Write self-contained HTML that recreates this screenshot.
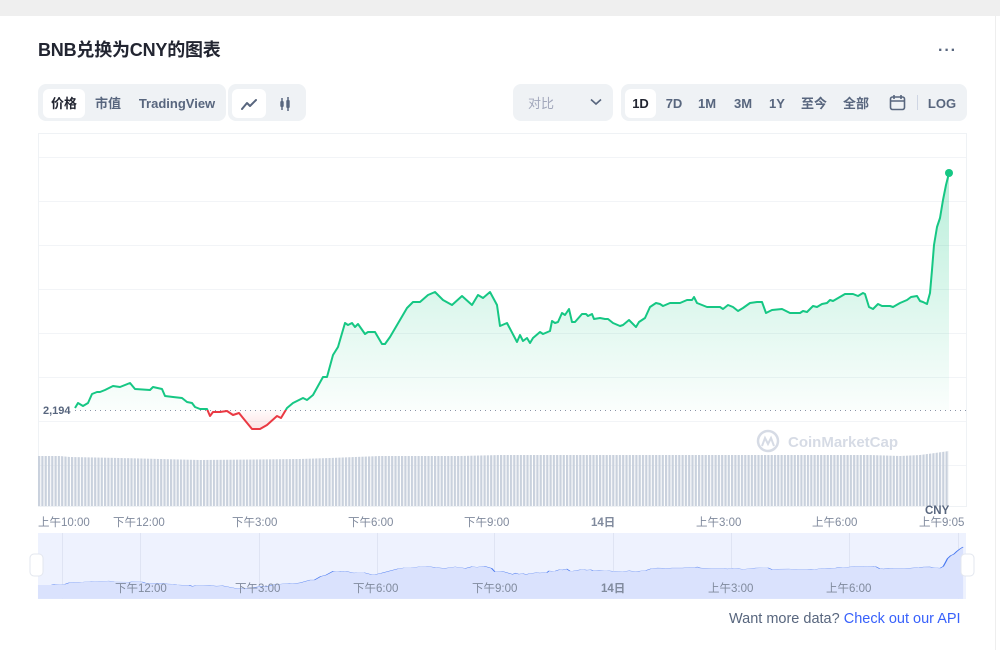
<!DOCTYPE html>
<html><head><meta charset="utf-8"><style>
*{margin:0;padding:0;box-sizing:border-box}
body{width:1000px;height:650px;background:#fff;font-family:"Liberation Sans","Noto Sans CJK SC",sans-serif;position:relative;overflow:hidden;color:#222531}
.top{position:absolute;left:0;top:0;width:1000px;height:16px;background:#efefef}
.rline{position:absolute;left:995px;top:16px;width:1px;height:634px;background:#eee}
h1{position:absolute;left:38px;top:36px;font-size:18px;font-weight:700;letter-spacing:-0.2px}
.dots{position:absolute;left:938px;top:42px;font-size:16px;color:#58667e;font-weight:700;letter-spacing:1px}
.grp{position:absolute;top:84px;height:37px;background:#eff2f5;border-radius:8px}
.btn{position:absolute;top:5px;height:29px;line-height:29px;font-size:13px;font-weight:700;color:#58667e;text-align:center;border-radius:6px}
.act{background:#fff;color:#222531}
.lbl{position:absolute;font-size:11.5px;color:#808a9d;white-space:nowrap}
</style></head><body>
<div class="top"></div><div class="rline"></div>
<h1>BNB兑换为CNY的图表</h1>
<div class="dots">···</div>

<div class="grp" style="left:38px;width:188px">
 <div class="btn act" style="left:5px;width:42px">价格</div>
 <div class="btn" style="left:50px;width:40px">市值</div>
 <div class="btn" style="left:96px;width:86px">TradingView</div>
</div>
<div class="grp" style="left:228px;width:78px">
 <div class="btn act" style="left:4px;width:34px"><svg width="18" height="14" viewBox="0 0 18 14" style="margin-top:8px"><path d="M2 12 L7 6 L10 9 L16 3" fill="none" stroke="#58667e" stroke-width="2" stroke-linecap="round" stroke-linejoin="round"/></svg></div>
 <div class="btn" style="left:40px;width:34px"><svg width="14" height="16" viewBox="0 0 14 16" style="margin-top:7px"><path d="M4 2v12M10 1v14" stroke="#58667e" stroke-width="1.5"/><rect x="2.3" y="5" width="3.4" height="6" rx="1" fill="#58667e"/><rect x="8.3" y="4" width="3.4" height="8" rx="1" fill="#58667e"/></svg></div>
</div>
<div class="grp" style="left:513px;width:100px;border-radius:8px">
 <div class="btn" style="left:14px;width:28px;color:#a1a7bb;font-weight:400">对比</div>
 <svg style="position:absolute;left:77px;top:14px" width="12" height="8" viewBox="0 0 12 8"><path d="M1 1.5 L6 6 L11 1.5" fill="none" stroke="#58667e" stroke-width="1.6"/></svg>
</div>
<div class="grp" style="left:621px;width:346px">
 <div class="btn act" style="left:4px;width:31px">1D</div>
 <div class="btn" style="left:38px;width:30px">7D</div>
 <div class="btn" style="left:71px;width:30px">1M</div>
 <div class="btn" style="left:106px;width:32px">3M</div>
 <div class="btn" style="left:142px;width:28px">1Y</div>
 <div class="btn" style="left:176px;width:34px">至今</div>
 <div class="btn" style="left:218px;width:34px">全部</div>
 <svg style="position:absolute;left:268px;top:10px" width="17" height="17" viewBox="0 0 17 17"><rect x="1.5" y="3" width="14" height="12.5" rx="2" fill="none" stroke="#58667e" stroke-width="1.6"/><path d="M1.5 7h14M5 1v4M12 1v4" stroke="#58667e" stroke-width="1.6"/></svg>
 <div style="position:absolute;left:296px;top:11px;width:1px;height:15px;background:#cfd6e4"></div>
 <div class="btn" style="left:303px;width:36px">LOG</div>
</div>

<svg style="position:absolute;left:0;top:0" width="1000" height="650">
<defs>
<linearGradient id="gg" x1="0" y1="173" x2="0" y2="410" gradientUnits="userSpaceOnUse"><stop offset="0" stop-color="#16c784" stop-opacity="0.3"/><stop offset="1" stop-color="#16c784" stop-opacity="0.02"/></linearGradient>
<linearGradient id="rg" x1="0" y1="410" x2="0" y2="430" gradientUnits="userSpaceOnUse"><stop offset="0" stop-color="#ea3943" stop-opacity="0.02"/><stop offset="1" stop-color="#ea3943" stop-opacity="0.15"/></linearGradient>
<clipPath id="up"><rect x="0" y="0" width="1000" height="410"/></clipPath>
<clipPath id="dn"><rect x="0" y="410" width="1000" height="100"/></clipPath>
<pattern id="bars" x="38" y="0" width="3.3" height="10" patternUnits="userSpaceOnUse"><rect x="0" y="0" width="2.2" height="10" fill="#c9d1dd"/></pattern>
<polyline id="pl" points="75,408 78,403 83,406 88,403 92,394 97,392 100,392 105,390 113,386 120,387 130,383 135,389 150,390 153,387 162,389 165,396 173,397 182,398 187,402 192,403 195,407 200,409 207,409 210,416 213,412 220,412 227,411 233,415 239,413 243,418 252,429 257,429 260,429 267,425 277,416 281,418 287,408 293,403 303,398 307,400 313,395 323,377 327,377 333,355 338,347 345,323 348,325 352,323 355,327 358,324 365,334 368,332 375,332 382,344 385,344 390,337 407,308 413,302 420,302 428,295 435,292 443,300 452,305 462,296 472,305 478,295 483,298 490,292 497,305 500,326 507,323 517,342 520,335 523,341 527,338 530,343 533,338 540,332 543,334 550,331 552,321 555,323 558,322 562,313 565,315 569,309 572,322 575,322 582,314 586,314 588,316 592,314 594,319 600,318 605,319 608,319 613,323 620,326 623,325 629,320 636,327 639,322 645,318 650,307 656,303 660,304 663,306 670,303 680,303 687,300 692,300 694,297 697,303 707,307 717,307 720,307 723,309 728,305 733,307 738,311 743,308 750,303 757,302 762,302 766,313 772,310 782,309 790,313 800,313 803,311 807,312 813,306 817,307 822,304 827,303 830,300 833,301 845,294 853,294 858,296 863,293 865,294 869,307 873,309 878,304 882,306 890,306 893,307 900,303 907,300 911,297 917,296 920,301 923,302 927,304 930,293 932,270 934,245 937,227 940,218 943,200 946,185 949,173" fill="none"/>
</defs>
<rect x="38.5" y="133.5" width="928" height="373" fill="none" stroke="#eff2f5"/>
<g stroke="#f2f4f7" stroke-width="1">
<line x1="39" y1="157.5" x2="966" y2="157.5"/><line x1="39" y1="201.5" x2="966" y2="201.5"/><line x1="39" y1="245.5" x2="966" y2="245.5"/><line x1="39" y1="289.5" x2="966" y2="289.5"/><line x1="39" y1="333.5" x2="966" y2="333.5"/><line x1="39" y1="377.5" x2="966" y2="377.5"/><line x1="39" y1="421.5" x2="966" y2="421.5"/><line x1="39" y1="465.5" x2="966" y2="465.5"/>
</g>
<polygon points="38,456 60,456 70,457 120,458 160,459 200,460 300,459 330,458 380,456 460,456 500,455 560,455 700,455 800,455 870,455 900,456 920,455 935,453 949,451 949,506 38,506" fill="url(#bars)"/>
<polygon clip-path="url(#up)" points="75,410 75,408 78,403 83,406 88,403 92,394 97,392 100,392 105,390 113,386 120,387 130,383 135,389 150,390 153,387 162,389 165,396 173,397 182,398 187,402 192,403 195,407 200,409 207,409 210,416 213,412 220,412 227,411 233,415 239,413 243,418 252,429 257,429 260,429 267,425 277,416 281,418 287,408 293,403 303,398 307,400 313,395 323,377 327,377 333,355 338,347 345,323 348,325 352,323 355,327 358,324 365,334 368,332 375,332 382,344 385,344 390,337 407,308 413,302 420,302 428,295 435,292 443,300 452,305 462,296 472,305 478,295 483,298 490,292 497,305 500,326 507,323 517,342 520,335 523,341 527,338 530,343 533,338 540,332 543,334 550,331 552,321 555,323 558,322 562,313 565,315 569,309 572,322 575,322 582,314 586,314 588,316 592,314 594,319 600,318 605,319 608,319 613,323 620,326 623,325 629,320 636,327 639,322 645,318 650,307 656,303 660,304 663,306 670,303 680,303 687,300 692,300 694,297 697,303 707,307 717,307 720,307 723,309 728,305 733,307 738,311 743,308 750,303 757,302 762,302 766,313 772,310 782,309 790,313 800,313 803,311 807,312 813,306 817,307 822,304 827,303 830,300 833,301 845,294 853,294 858,296 863,293 865,294 869,307 873,309 878,304 882,306 890,306 893,307 900,303 907,300 911,297 917,296 920,301 923,302 927,304 930,293 932,270 934,245 937,227 940,218 943,200 946,185 949,173 949,410" fill="url(#gg)"/>
<polygon clip-path="url(#dn)" points="200,410 207,409 210,416 213,412 220,412 227,411 233,415 239,413 243,418 252,429 257,429 260,429 267,425 277,416 281,418 287,408 287,410" fill="url(#rg)"/>
<line x1="75" y1="410.5" x2="966" y2="410.5" stroke="#8a93a6" stroke-width="1" stroke-dasharray="1,4"/>
<use href="#pl" clip-path="url(#up)" stroke="#16c784" stroke-width="2" stroke-linejoin="round"/>
<use href="#pl" clip-path="url(#dn)" stroke="#ea3943" stroke-width="2" stroke-linejoin="round"/>
<circle cx="949" cy="173" r="4" fill="#16c784"/>
<text x="43" y="414" font-family="Liberation Sans,sans-serif" font-size="11" font-weight="700" fill="#58667e">2,194</text>
<circle cx="768" cy="441" r="10" fill="none" stroke="#d6dbe5" stroke-width="2.5"/>
<path d="M762 446 L765 438 L768 444 L771 438 L774 446" fill="none" stroke="#d6dbe5" stroke-width="2"/>
<text x="788" y="447" font-family="Liberation Sans,sans-serif" font-size="15" font-weight="700" fill="#d6dbe5">CoinMarketCap</text>
<rect x="38" y="533" width="928" height="66" fill="#eef2fe"/>
<g stroke="#dfe4f3"><line x1="62.5" y1="533" x2="62.5" y2="599"/><line x1="140.5" y1="533" x2="140.5" y2="599"/><line x1="259.5" y1="533" x2="259.5" y2="599"/><line x1="377.5" y1="533" x2="377.5" y2="599"/><line x1="494.5" y1="533" x2="494.5" y2="599"/><line x1="613.5" y1="533" x2="613.5" y2="599"/><line x1="731.5" y1="533" x2="731.5" y2="599"/><line x1="849.5" y1="533" x2="849.5" y2="599"/><line x1="958.5" y1="533" x2="958.5" y2="599"/></g>
<g transform="translate(-26.7,518.9) scale(1.043,0.162)">
<polygon points="62,408 75,408 78,403 83,406 88,403 92,394 97,392 100,392 105,390 113,386 120,387 130,383 135,389 150,390 153,387 162,389 165,396 173,397 182,398 187,402 192,403 195,407 200,409 207,409 210,416 213,412 220,412 227,411 233,415 239,413 243,418 252,429 257,429 260,429 267,425 277,416 281,418 287,408 293,403 303,398 307,400 313,395 323,377 327,377 333,355 338,347 345,323 348,325 352,323 355,327 358,324 365,334 368,332 375,332 382,344 385,344 390,337 407,308 413,302 420,302 428,295 435,292 443,300 452,305 462,296 472,305 478,295 483,298 490,292 497,305 500,326 507,323 517,342 520,335 523,341 527,338 530,343 533,338 540,332 543,334 550,331 552,321 555,323 558,322 562,313 565,315 569,309 572,322 575,322 582,314 586,314 588,316 592,314 594,319 600,318 605,319 608,319 613,323 620,326 623,325 629,320 636,327 639,322 645,318 650,307 656,303 660,304 663,306 670,303 680,303 687,300 692,300 694,297 697,303 707,307 717,307 720,307 723,309 728,305 733,307 738,311 743,308 750,303 757,302 762,302 766,313 772,310 782,309 790,313 800,313 803,311 807,312 813,306 817,307 822,304 827,303 830,300 833,301 845,294 853,294 858,296 863,293 865,294 869,307 873,309 878,304 882,306 890,306 893,307 900,303 907,300 911,297 917,296 920,301 923,302 927,304 930,293 932,270 934,245 937,227 940,218 943,200 946,185 949,173 949,494 62,494" fill="#dae2fd"/>
<use href="#pl" stroke="#4878f0" stroke-width="1.3" vector-effect="non-scaling-stroke"/>
</g>
<rect x="30" y="554" width="13" height="22" rx="4" fill="#fff" stroke="#e3e7ef"/>
<rect x="961" y="554" width="13" height="22" rx="4" fill="#fff" stroke="#e3e7ef"/>
</svg>

<div class="lbl" style="left:38px;top:514px">上午10:00</div>
<div class="lbl" style="left:113px;top:514px">下午12:00</div>
<div class="lbl" style="left:232px;top:514px">下午3:00</div>
<div class="lbl" style="left:348px;top:514px">下午6:00</div>
<div class="lbl" style="left:464px;top:514px">下午9:00</div>
<div class="lbl" style="left:591px;top:514px;font-weight:700">14日</div>
<div class="lbl" style="left:696px;top:514px">上午3:00</div>
<div class="lbl" style="left:812px;top:514px">上午6:00</div>
<div class="lbl" style="left:925px;top:505px;font-weight:700;color:#58667e">CNY</div>
<div class="lbl" style="left:919px;top:514px">上午9:05</div>

<div class="lbl" style="left:115px;top:580px">下午12:00</div>
<div class="lbl" style="left:235px;top:580px">下午3:00</div>
<div class="lbl" style="left:353px;top:580px">下午6:00</div>
<div class="lbl" style="left:472px;top:580px">下午9:00</div>
<div class="lbl" style="left:601px;top:580px;font-weight:700">14日</div>
<div class="lbl" style="left:708px;top:580px">上午3:00</div>
<div class="lbl" style="left:826px;top:580px">上午6:00</div>

<div style="position:absolute;left:729px;top:611px;font-size:14.5px;color:#58667e;white-space:nowrap">Want more data? <span style="color:#3861fb">Check out our API</span></div>
</body></html>
